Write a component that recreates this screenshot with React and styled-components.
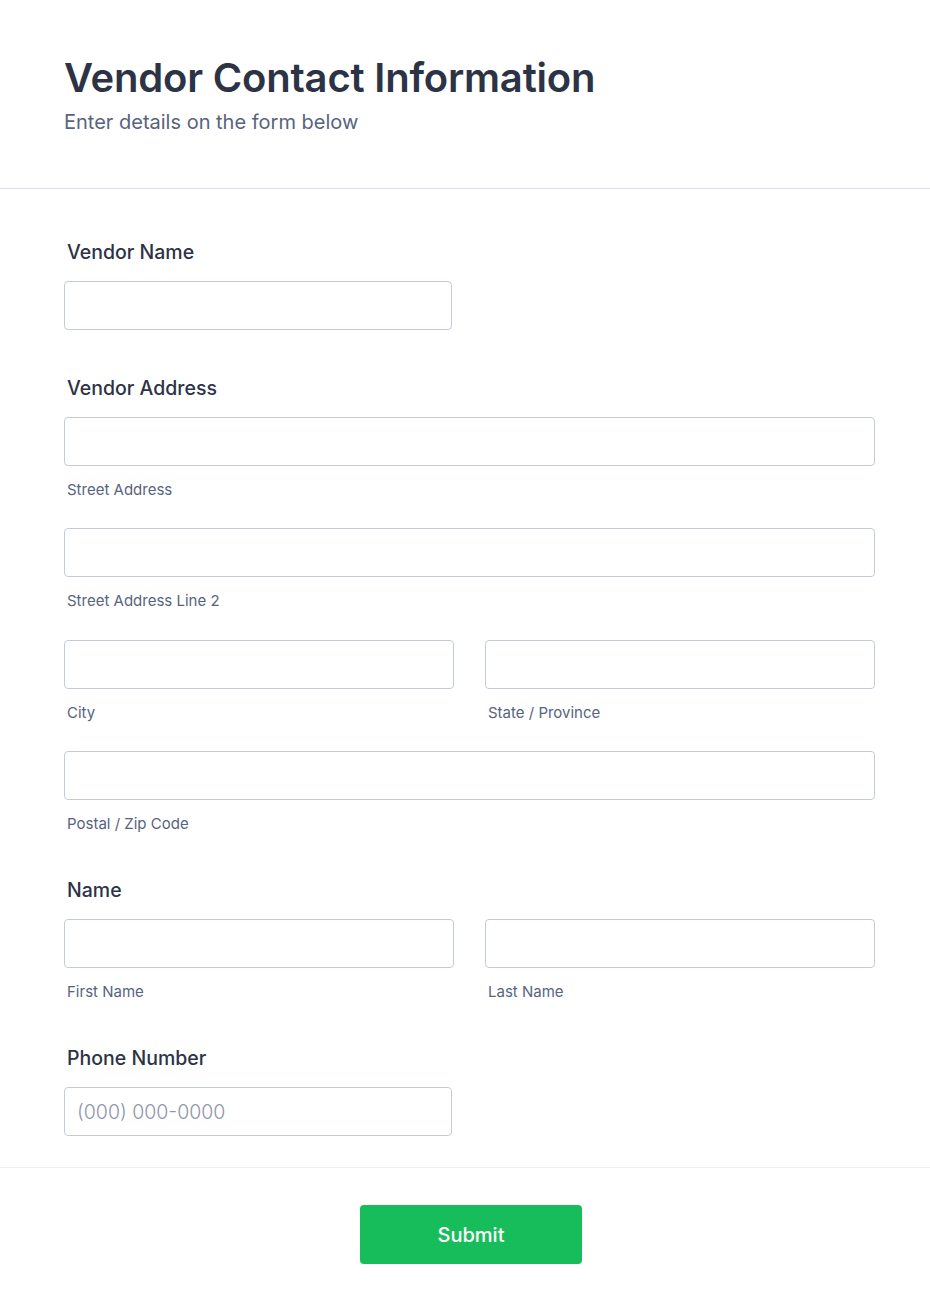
import React from "react";
import styled, { createGlobalStyle } from "styled-components";

const Global = createGlobalStyle`
  html, body { margin: 0; padding: 0; background: #fff; }
  body { font-family: Inter, "Noto Sans", sans-serif; color: #2c3345; }
  * { box-sizing: border-box; }
`;

const Page = styled.div`
  width: 930px;
  min-height: 1313px;
  background: #fff;
`;

const Header = styled.header`
  padding: 54px 64px 0 64px;
  height: 189px;
  border-bottom: 1px solid #dfe2ea;
`;

const Title = styled.h1`
  margin: 0;
  font-size: 40px;
  line-height: 48px;
  font-weight: 600;
  color: #2c3345;
  letter-spacing: -0.2px;
`;

const Subtitle = styled.p`
  margin: 8px 0 0 0;
  font-size: 20px;
  line-height: 24px;
  color: #57647e;
`;

const Body = styled.main`
  padding: 51px 55px 31px 64px;
  display: flex;
  flex-direction: column;
  gap: 46px;
`;

const Field = styled.section`
  display: flex;
  flex-direction: column;
  gap: 17px;
`;

const Label = styled.label`
  padding-left: 3px;
  font-size: 19.5px;
  line-height: 24px;
  font-weight: 500;
  color: #2c3345;
`;

const Rows = styled.div`
  display: flex;
  flex-direction: column;
  gap: 30.4px;
`;

const Row = styled.div`
  display: grid;
  grid-template-columns: ${(p) => (p.$split ? "1fr 1fr" : "1fr")};
  column-gap: 31px;
`;

const Cell = styled.div`
  display: flex;
  flex-direction: column;
  gap: 15px;
`;

const Input = styled.input`
  width: ${(p) => p.$width || "100%"};
  height: 49px;
  border: 1px solid #c3cad8;
  border-radius: 4px;
  background: #fff;
  padding: 0 12px;
  font-family: Inter, "Noto Sans", sans-serif;
  font-size: 19.5px;
  font-weight: 300;
  color: #2c3345;
  outline: none;
  &::placeholder { color: #8f96a8; font-weight: 300; }
`;

const Sub = styled.span`
  padding-left: 3px;
  font-size: 15px;
  line-height: 17px;
  color: #57647e;
`;

const Footer = styled.footer`
  border-top: 1px solid #eceef3;
  padding: 37px 0 50px 0;
  display: flex;
  justify-content: center;
`;

const Submit = styled.button`
  width: 222px;
  height: 59px;
  margin-left: 12px;
  border: none;
  border-radius: 4px;
  background: #18bd5b;
  color: #fff;
  font-family: Inter, "Noto Sans", sans-serif;
  font-size: 20px;
  font-weight: 500;
  cursor: pointer;
`;

const SubField = ({ label }) => (
  <Cell>
    <Input />
    <Sub>{label}</Sub>
  </Cell>
);

export default function App() {
  return (
    <Page>
      <Global />
      <Header>
        <Title>Vendor Contact Information</Title>
        <Subtitle>Enter details on the form below</Subtitle>
      </Header>
      <Body>
        <Field>
          <Label>Vendor Name</Label>
          <Input $width="388px" />
        </Field>
        <Field>
          <Label>Vendor Address</Label>
          <Rows>
            <Row>
              <SubField label="Street Address" />
            </Row>
            <Row>
              <SubField label="Street Address Line 2" />
            </Row>
            <Row $split>
              <SubField label="City" />
              <SubField label="State / Province" />
            </Row>
            <Row>
              <SubField label="Postal / Zip Code" />
            </Row>
          </Rows>
        </Field>
        <Field>
          <Label>Name</Label>
          <Row $split>
            <SubField label="First Name" />
            <SubField label="Last Name" />
          </Row>
        </Field>
        <Field>
          <Label>Phone Number</Label>
          <Input $width="388px" placeholder="(000) 000-0000" />
        </Field>
      </Body>
      <Footer>
        <Submit>Submit</Submit>
      </Footer>
    </Page>
  );
}
